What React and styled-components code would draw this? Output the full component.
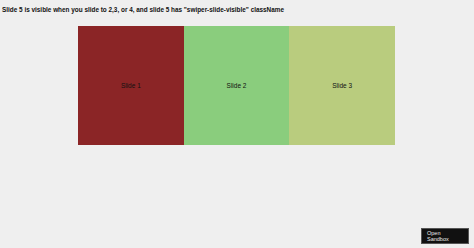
import React from "react";
import styled, { createGlobalStyle } from "styled-components";

const Global = createGlobalStyle`
  html, body { margin: 0; padding: 0; background: #efefef; }
  body { font-family: "Liberation Sans", Arial, sans-serif; width: 474px; height: 248px; overflow: hidden; }
`;

const Page = styled.div`
  position: relative;
  width: 474px;
  height: 248px;
  display: flex;
  flex-direction: column;
`;

const Title = styled.h1`
  margin: 6px 0 0 2px;
  font-size: 6.4px;
  line-height: 8px;
  font-weight: bold;
  color: #111;
  white-space: nowrap;
`;

const Swiper = styled.div`
  margin: 12px 0 0 78px;
  width: 317px;
  height: 119px;
  display: flex;
`;

const Slide = styled.div`
  flex: 1;
  background: ${(p) => p.$bg};
  display: flex;
  align-items: center;
  justify-content: center;
  font-size: 6.5px;
  color: #111;
  padding-bottom: 1px;
`;

const OpenButton = styled.div`
  position: absolute;
  left: 421px;
  top: 228px;
  width: 48px;
  height: 16px;
  background: #111;
  border: 1px solid #555;
  box-sizing: border-box;
  color: #eee;
  font-size: 5.5px;
  line-height: 6px;
  padding: 1px 0 0 5px;
`;

export default function App() {
  return (
    <>
      <Global />
      <Page>
        <Title>
          Slide 5 is visible when you slide to 2,3, or 4, and slide 5 has "swiper-slide-visible" className
        </Title>
        <Swiper>
          <Slide $bg="#8b2526">Slide 1</Slide>
          <Slide $bg="#8acd7d">Slide 2</Slide>
          <Slide $bg="#b9cc7e">Slide 3</Slide>
        </Swiper>
        <OpenButton>
          Open
          <br />
          Sandbox
        </OpenButton>
      </Page>
    </>
  );
}
